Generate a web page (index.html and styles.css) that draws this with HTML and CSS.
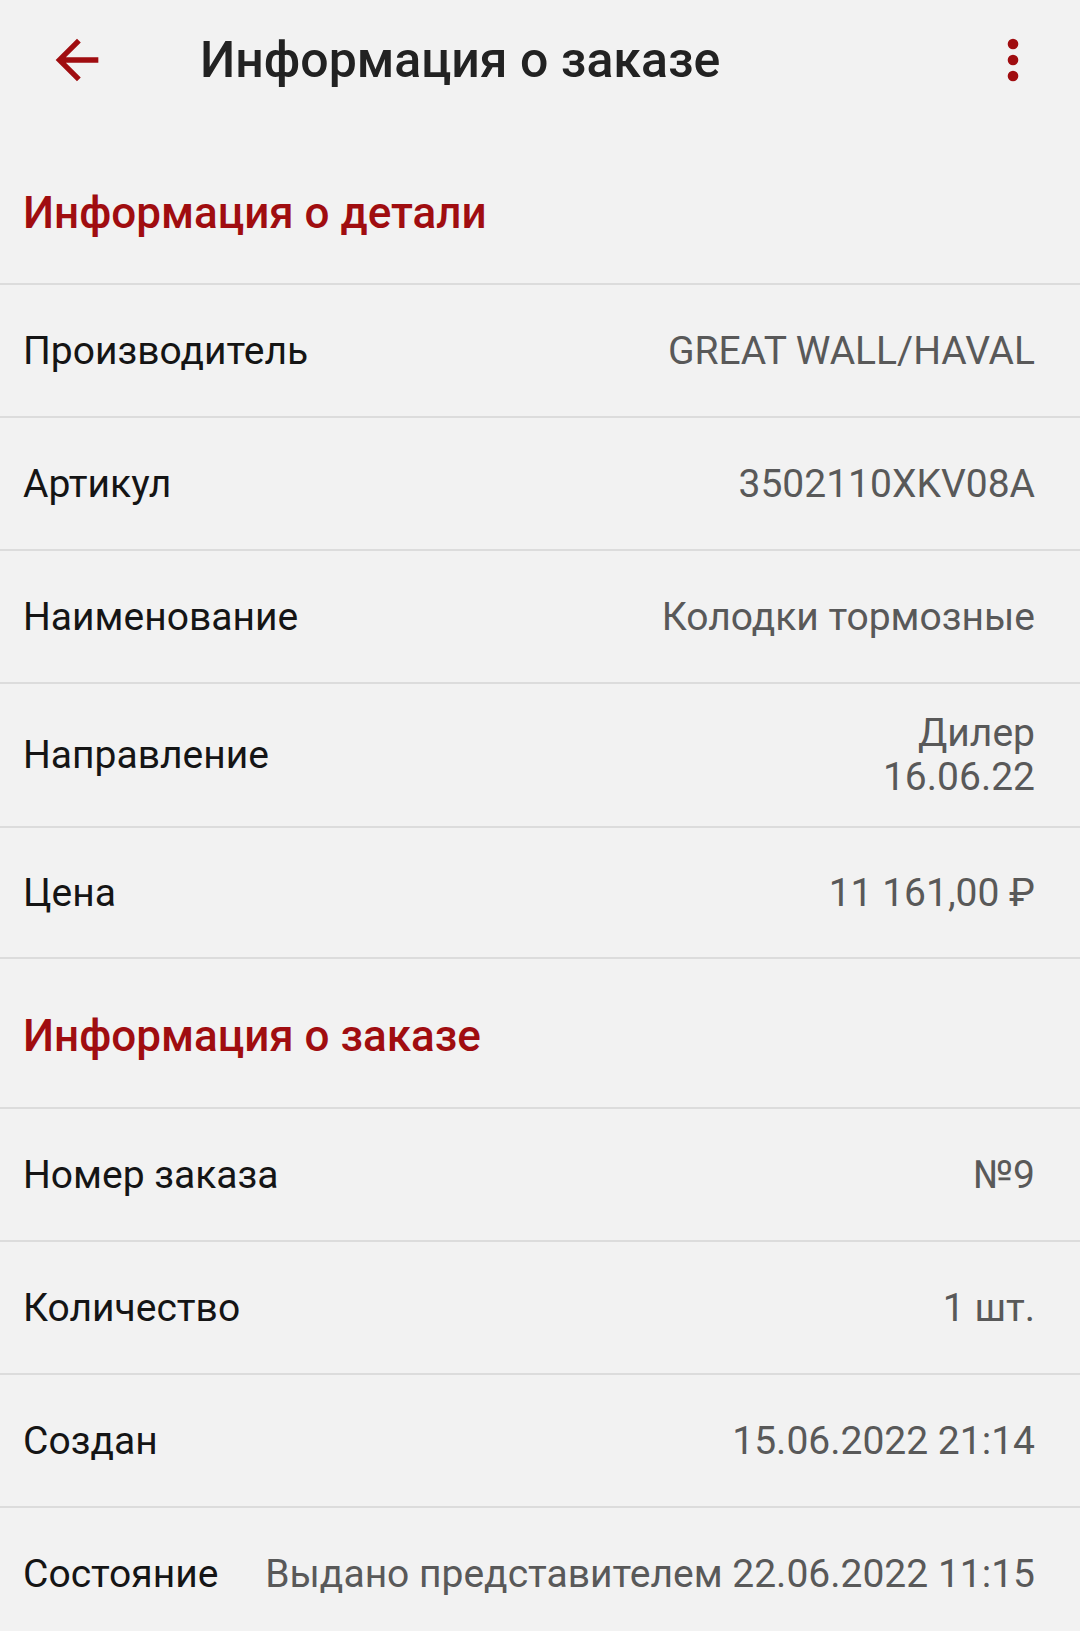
FILE: index.html
```html
<!DOCTYPE html>
<html lang="ru">
<head>
  <meta charset="UTF-8" />
  <meta name="viewport" content="width=device-width, initial-scale=1.0"/>
  <title>Информация о заказе</title>
  <link rel="stylesheet" href="styles.css">
</head>
<body>

  <div class="toolbar">
    <button class="icon-btn back" aria-label="Назад">
      <svg viewBox="0 0 24 24" width="64" height="64"><path d="M20 11H7.83l5.59-5.59L12 4l-8 8 8 8 1.41-1.41L7.83 13H20v-2z"/></svg>
    </button>
    <h1>Информация о заказе</h1>
    <button class="icon-btn more" aria-label="Меню">
      <svg viewBox="0 0 24 24" width="64" height="64"><circle cx="12" cy="6" r="2"/><circle cx="12" cy="12" r="2"/><circle cx="12" cy="18" r="2"/></svg>
    </button>
  </div>

  <section class="block first">
    <h2>Информация о детали</h2>
    <div class="row"><span class="label">Производитель</span><span class="value">GREAT WALL/HAVAL</span></div>
    <div class="row"><span class="label">Артикул</span><span class="value">3502110XKV08A</span></div>
    <div class="row"><span class="label">Наименование</span><span class="value">Колодки тормозные</span></div>
    <div class="row tall"><span class="label">Направление</span><span class="value">Дилер<br>16.06.22</span></div>
    <div class="row"><span class="label">Цена</span><span class="value">11 161,00 ₽</span></div>
  </section>

  <section class="block">
    <h2>Информация о заказе</h2>
    <div class="row"><span class="label">Номер заказа</span><span class="value">№9</span></div>
    <div class="row"><span class="label">Количество</span><span class="value">1 шт.</span></div>
    <div class="row"><span class="label">Создан</span><span class="value">15.06.2022 21:14</span></div>
    <div class="row"><span class="label">Состояние</span><span class="value">Выдано представителем 22.06.2022 11:15</span></div>
  </section>

</body>
</html>
```

FILE: styles.css
```css
body {
  margin: 0;
  background: #f2f2f2;
  font-family: Roboto, 'Noto Sans', sans-serif;
  color: #1a1a1a;
}

.toolbar {
  display: flex;
  align-items: center;
  height: 120px;
  padding: 0 35px 0 45px;
}

.icon-btn {
  background: none;
  border: none;
  padding: 0;
  width: 64px;
  height: 64px;
  fill: #a00d10;
}

.icon-btn svg {
  display: block;
}

.toolbar h1 {
  flex: 1;
  margin: 0 0 0 91px;
  font-size: 50px;
  font-weight: 500;
  color: #222;
}

.block h2 {
  display: flex;
  align-items: center;
  box-sizing: border-box;
  height: 148px;
  margin: 0;
  padding: 6px 0 0 23px;
  font-size: 44px;
  font-weight: 500;
  color: #a00d10;
}

.block.first h2 {
  height: 163px;
  padding-top: 22px;
}

.row {
  display: flex;
  justify-content: space-between;
  align-items: center;
  gap: 40px;
  height: 133px;
  box-sizing: border-box;
  padding: 0 45px 0 23px;
  border-top: 2px solid #dcdcdc;
  font-size: 39px;
}

.row:last-child {
  border-bottom: 2px solid #dcdcdc;
}

.block:last-child .row:last-child {
  border-bottom: none;
}

.row.tall {
  height: 144px;
}

.label {
  color: #151515;
  white-space: nowrap;
}

.value {
  color: #595959;
  text-align: right;
  line-height: 44px;
}
```
